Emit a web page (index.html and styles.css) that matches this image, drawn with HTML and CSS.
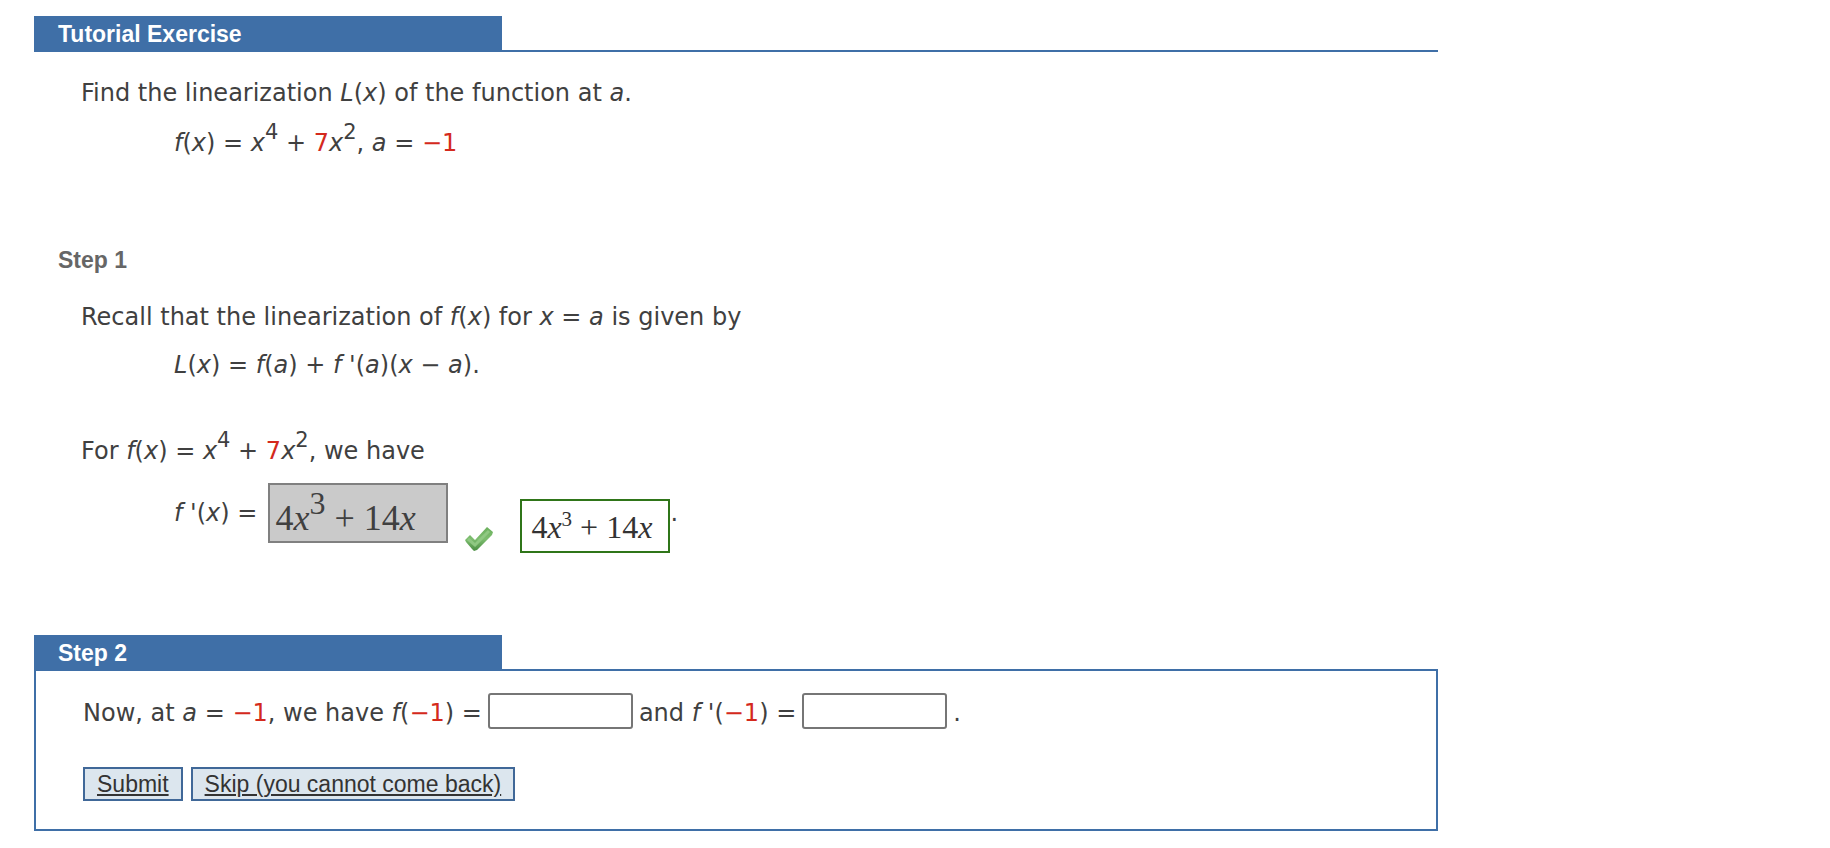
FILE: index.html
```html
<!DOCTYPE html>
<html lang="en">
<head>
    <meta charset="UTF-8">
    <meta name="viewport" content="width=device-width, initial-scale=1.0">
    <title>Tutorial Exercise</title>
    <link rel="stylesheet" href="styles.css">
</head>
<body>
    <main class="tutorial">
        <header class="bar">
            <h1 class="tab">Tutorial Exercise</h1>
        </header>
        <section class="question">
            <p>Find the linearization <i>L</i>(<i>x</i>) of the function at <i>a</i>.</p>
            <p class="formula"><i>f</i>(<i>x</i>) = <i>x</i><sup>4</sup> + <span class="red">7</span><i>x</i><sup>2</sup>, <i>a</i> = <span class="red">−1</span></p>
        </section>

        <section class="step">
            <h2 class="step-title">Step 1</h2>
            <div class="step-body">
                <p>Recall that the linearization of <i>f</i>(<i>x</i>) for <i>x</i> = <i>a</i> is given by</p>
                <p class="formula"><i>L</i>(<i>x</i>) = <i>f</i>(<i>a</i>) + <i>f</i> <i>'</i>(<i>a</i>)(<i>x</i> − <i>a</i>).</p>
                <p class="for-line">For <i>f</i>(<i>x</i>) = <i>x</i><sup>4</sup> + <span class="red">7</span><i>x</i><sup>2</sup>, we have</p>
                <div class="answer-row">
                    <span class="answer-label"><i>f</i> <i>'</i>(<i>x</i>) =</span>
                    <span class="answer">4<i>x</i><sup>3</sup> + 14<i>x</i></span>
                    <svg class="check" viewBox="0 0 28 24" role="img" aria-label="Correct">
                        <defs>
                            <linearGradient id="green" x1="0" y1="0" x2="0" y2="1">
                                <stop offset="0" stop-color="#6bb05d"/>
                                <stop offset="0.5" stop-color="#7dbd6f"/>
                                <stop offset="1" stop-color="#4b8f43"/>
                            </linearGradient>
                        </defs>
                        <path d="M0 13 L5 8 L10 13 L22 0 L28 5 L27 8 L12 23 L9 24 L7 22 L1 15 Z" fill="url(#green)"/>
                        <path d="M3 12 L10 18 L24 4" fill="none" stroke="#8fc882" stroke-width="3"/>
                    </svg>
                    <span class="key">4<i>x</i><sup>3</sup> + 14<i>x</i></span>
                    <span class="answer-label">.</span>
                </div>
            </div>
        </section>

        <header class="bar">
            <h2 class="tab">Step 2</h2>
        </header>
        <form class="panel">
            <div class="input-row">
                <label for="value">Now, at <i>a</i> = <span class="red">−1</span>, we have <i>f</i>(<span class="red">−1</span>) =</label>
                <input type="text" id="value">
                <label for="derivative">and <i>f</i> <i>'</i>(<span class="red">−1</span>) =</label>
                <input type="text" id="derivative">
                <span class="period">.</span>
            </div>
            <div class="buttons">
                <button type="button">Submit</button>
                <button type="button">Skip (you cannot come back)</button>
            </div>
        </form>
    </main>
</body>
</html>
```

FILE: styles.css
```css
body {
    margin: 0;
    padding: 16px 34px;
    font-family: Verdana, "DejaVu Sans", sans-serif;
    font-size: 24px;
    line-height: 30px;
    color: #404040;
    background-color: #fff;
}

h1, h2, p {
    margin: 0;
}

sup {
    font-size: 21px;
    line-height: 0;
    vertical-align: 12px;
}

.tutorial {
    max-width: 1404px;
}

.bar {
    border-bottom: 2px solid #3f6fa7;
}

.tab {
    box-sizing: border-box;
    width: 33.333%;
    padding: 2px 24px 0;
    font-family: Arial, "Liberation Sans", sans-serif;
    font-size: 23px;
    line-height: 32px;
    color: #fff;
    background-color: #3f6fa7;
}

.red {
    color: #d4291c;
}

.question {
    padding: 26px 47px 0;
}

.formula {
    padding-left: 93px;
    margin-top: 20px;
}

.step {
    margin-top: 87px;
    padding: 0 24px;
}

.step-title {
    font-family: Arial, "Liberation Sans", sans-serif;
    font-size: 23px;
    color: #666;
}

.step-body {
    padding: 27px 23px 0;
}

.step-body .formula {
    margin-top: 18px;
}

.for-line {
    margin-top: 56px;
}

/* answer boxes */
.answer-row {
    display: flex;
    align-items: flex-start;
    padding-left: 93px;
    margin: 17px 0 82px;
}

.answer-label {
    padding-top: 15px;
}

.answer, .key {
    box-sizing: border-box;
    font-family: "Times New Roman", "Liberation Serif", serif;
    white-space: nowrap;
}

.answer {
    width: 180px;
    height: 60px;
    margin-left: 11px;
    padding: 12px 5px 0;
    border: 2px solid #808080;
    background-color: #cacaca;
    font-size: 36px;
    line-height: 42px;
}

.answer sup {
    font-size: 32px;
    vertical-align: 16px;
}

.check {
    width: 28px;
    height: 24px;
    margin: 44px 27px 0 17px;
}

.key {
    width: 150px;
    height: 54px;
    margin-top: 16px;
    padding: 8px 9px 0;
    border: 2px solid #2f7519;
    color: #333;
    font-size: 32px;
    line-height: 36px;
}

/* step 2 */
.panel {
    padding: 22px 47px 28px;
    border: 2px solid #3f6fa7;
    border-top: none;
}

.input-row {
    display: flex;
    align-items: center;
    gap: 6px;
}

.input-row label, .period {
    padding-top: 4px;
}

.input-row input {
    box-sizing: border-box;
    width: 145px;
    height: 36px;
    padding: 2px 4px;
    border: 2px solid #767676;
    border-radius: 3px;
    background-color: #fff;
    font: inherit;
}

.buttons {
    display: flex;
    gap: 8px;
    margin-top: 38px;
}

.buttons button {
    padding: 1px 12px 0;
    border: 2px solid #406898;
    background-color: #dce6ee;
    color: #333;
    font-family: Arial, "Liberation Sans", sans-serif;
    font-size: 23px;
    line-height: 29px;
    text-decoration: underline;
    cursor: pointer;
}
```
